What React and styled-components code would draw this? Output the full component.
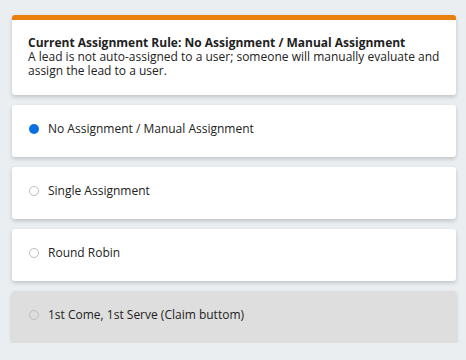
import React from 'react'
import styled, { createGlobalStyle } from 'styled-components'

const Global = createGlobalStyle`
body {
    margin: 0;
    background: #ebeef0;
    font-family: 'Open Sans', 'Noto Sans', sans-serif;
    color: #222;
}
`

const Page = styled.div`
display: flex;
flex-direction: column;
gap: 10px;
padding: 15px 10px 0 12px;
`

const RuleCard = styled.div`
background: #fff;
border-top: 5px solid #e97f0c;
border-radius: 3px;
box-shadow: 0 2px 4px rgba(0, 0, 0, 0.18);
padding: 15px 16px 17px;
font-size: 12px;
line-height: 14px;
`

const RuleTitle = styled.div`
font-weight: 700;
line-height: 15px;
`

const Option = styled.label`
display: flex;
align-items: center;
gap: 9px;
height: 52px;
box-sizing: border-box;
padding: 16px 16px 20px 16px;
border-radius: 3px;
background: ${p => (p.disabled ? '#dedede' : '#fff')};
box-shadow: 0 2px 4px rgba(0, 0, 0, 0.18);
font-size: 12px;
line-height: 16px;
color: #222;
`

const Radio = styled.span`
width: 10px;
height: 10px;
border-radius: 50%;
box-sizing: border-box;
margin-left: 1px;
flex-shrink: 0;
border: ${p => (p.checked ? 'none' : '1px solid #bdbdbd')};
background: ${p => (p.checked ? '#0b6fe3' : 'transparent')};
`

const options = [
  { label: 'No Assignment / Manual Assignment', checked: true },
  { label: 'Single Assignment' },
  { label: 'Round Robin' },
  { label: '1st Come, 1st Serve (Claim buttom)', disabled: true },
]

const App = () => {
  return (
    <>
      <Global />
      <Page>
        <RuleCard>
          <RuleTitle>Current Assignment Rule: No Assignment / Manual Assignment</RuleTitle>
          A lead is not auto-assigned to a user; someone will manually evaluate and assign the lead to a user.
        </RuleCard>
        {options.map(o => (
          <Option key={o.label} disabled={o.disabled}>
            <Radio checked={o.checked} />
            {o.label}
          </Option>
        ))}
      </Page>
    </>
  )
}

export default App
